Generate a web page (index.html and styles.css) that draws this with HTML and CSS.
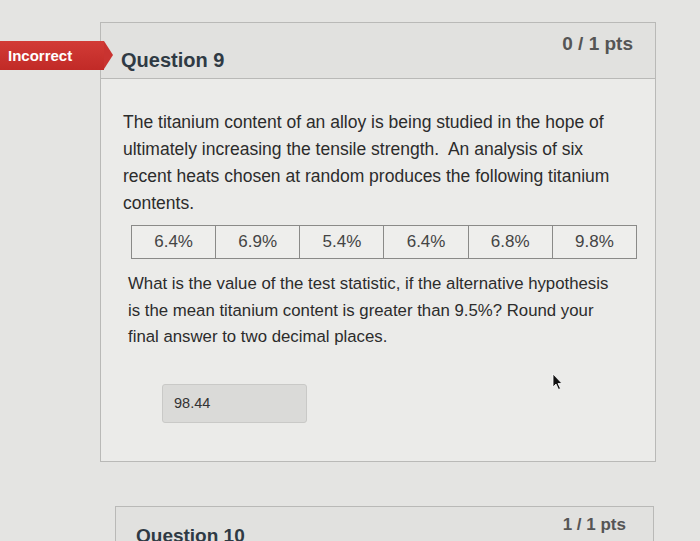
FILE: index.html
```html
<!DOCTYPE html>
<html>
<head>
<meta charset="utf-8">
<link rel="stylesheet" href="styles.css">
</head>
<body>
<div class="page">
  <div class="badge">Incorrect</div>
  <section class="card">
    <header class="card-head">
      <h2 class="q-title">Question 9</h2>
      <span class="pts">0 / 1 pts</span>
    </header>
    <div class="card-body">
      <p class="text">The titanium content of an alloy is being studied in the hope of ultimately increasing the tensile strength.&nbsp; An analysis of six recent heats chosen at random produces the following titanium contents.</p>
      <table class="data">
        <tr><td>6.4%</td><td>6.9%</td><td>5.4%</td><td>6.4%</td><td>6.8%</td><td>9.8%</td></tr>
      </table>
      <p class="text text2">What is the value of the test statistic, if the alternative hypothesis is the mean titanium content is greater than 9.5%? Round your final answer to two decimal places.</p>
      <div class="answer">98.44</div>
    </div>
  </section>
  <section class="card card2">
    <header class="card-head head2">
      <h2 class="q-title">Question 10</h2>
      <span class="pts">1 / 1 pts</span>
    </header>
  </section>
  <svg class="cursor" width="12" height="18" viewBox="0 0 12 18"><path d="M1 1 L1 14 L4 11 L6.5 16.5 L8.5 15.5 L6 10.5 L10 10.5 Z" fill="#111" stroke="#fff" stroke-width="0.8"/></svg>
</div>
</body>
</html>
```
FILE: styles.css
```css
html, body {
  margin: 0;
  padding: 0;
}
body {
  background: #e4e4e2;
  font-family: "Liberation Sans", Arial, sans-serif;
  width: 700px;
  height: 541px;
  overflow: hidden;
}
.page {
  position: relative;
  padding: 22px 0 0 100px;
}
.badge {
  position: absolute;
  left: 0;
  top: 41px;
  width: 104px;
  height: 29px;
  background: linear-gradient(#d23b36, #c12a27);
  color: #fff;
  font-weight: bold;
  font-size: 15px;
  line-height: 29px;
  padding-left: 8px;
  box-sizing: border-box;
}
.badge::after {
  content: "";
  position: absolute;
  right: -9px;
  top: 0;
  border-top: 14.5px solid transparent;
  border-bottom: 14.5px solid transparent;
  border-left: 9px solid #c93330;
}
.card {
  width: 556px;
  border: 1px solid #b9b9b7;
  background: #ebebe9;
  box-sizing: border-box;
}
.card-head {
  height: 56px;
  background: #e1e1df;
  border-bottom: 1px solid #b9b9b7;
  display: flex;
  justify-content: space-between;
  align-items: flex-start;
  padding: 0 22px 0 20px;
  box-sizing: border-box;
}
.q-title {
  margin: 0;
  padding-top: 26px;
  font-size: 20px;
  font-weight: bold;
  color: #2f3a44;
}
.pts {
  padding-top: 10px;
  font-size: 19px;
  font-weight: bold;
  color: #555;
}
.card-body {
  padding: 30px 30px 38px 22px;
  height: 382px;
  box-sizing: border-box;
}
.text {
  margin: 0;
  width: 492px;
  font-size: 17.5px;
  line-height: 27px;
  color: #2c2c2c;
}
.data {
  margin: 8px 0 0 8px;
  width: 506px;
  border-collapse: collapse;
  background: #eeeeec;
}
.data td {
  border: 1px solid #8a8a88;
  height: 32px;
  padding: 0;
  text-align: center;
  font-size: 17px;
  color: #444;
  width: 16.66%;
}
.text2 {
  margin: 12px 0 0 5px;
  width: 488px;
  font-size: 16.8px;
  line-height: 26.5px;
}
.answer {
  margin: 33px 0 0 39px;
  width: 145px;
  height: 39px;
  box-sizing: border-box;
  background: #dadad8;
  border: 1px solid #c9c9c7;
  border-radius: 3px;
  font-size: 14.5px;
  color: #333;
  padding: 10px 0 0 11px;
}
.card2 {
  margin: 44px 0 0 15px;
  width: 539px;
}
.head2 {
  height: 60px;
}
.head2 .q-title {
  padding-top: 18px;
  font-size: 19px;
}
.head2 .pts {
  padding-top: 8px;
  font-size: 17px;
  padding-right: 5px;
}
.cursor {
  position: absolute;
  left: 552px;
  top: 373px;
}
```
